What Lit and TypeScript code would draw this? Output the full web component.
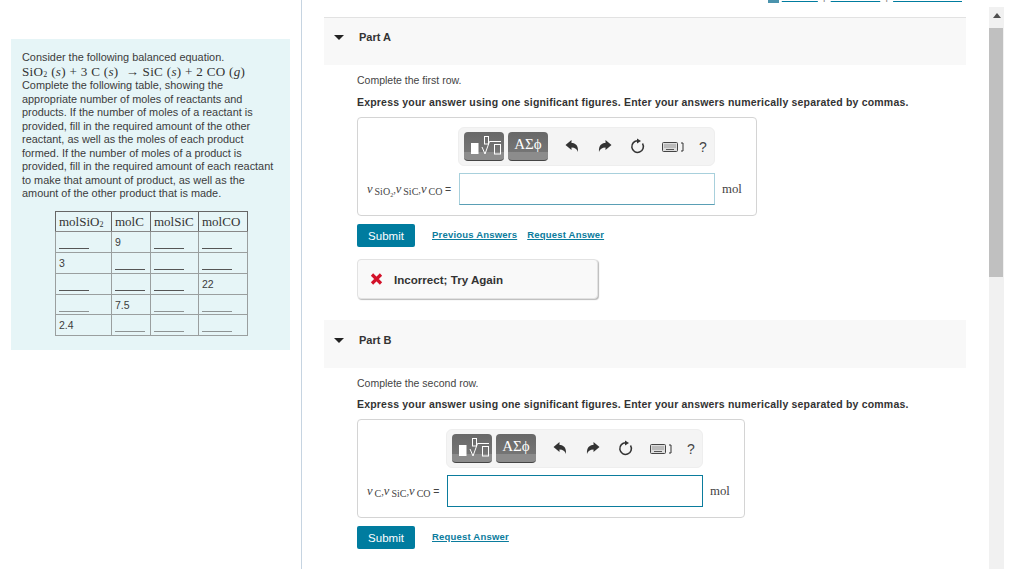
import { LitElement, css, html, svg } from "lit";
import { customElement } from "lit/decorators.js";

const blank = html`<span class="blank"></span>`;

@customElement("app-root")
export class AppRoot extends LitElement {
  render() {
    return html`
      <div class="left">
        <div class="problem">
          <div>Consider the following balanced equation.</div>
          <div class="eq">
            SiO<sub>2</sub> (<i>s</i>) + 3 C (<i>s</i>) &nbsp;→ SiC (<i>s</i>) + 2 CO (<i>g</i>)
          </div>
          <div>
            Complete the following table, showing the appropriate number of moles of reactants and
            products. If the number of moles of a reactant is provided, fill in the required amount
            of the other reactant, as well as the moles of each product formed. If the number of
            moles of a product is provided, fill in the required amount of each reactant to make
            that amount of product, as well as the amount of the other product that is made.
          </div>
          ${this._table()}
        </div>
      </div>

      <div class="main">
        <div class="top-links">
          <span class="top-icon"></span>
          <a>Review</a><span class="sep">|</span><a>Constants</a><span class="sep">|</span><a>Periodic Table</a>
        </div>

        <div class="part-head first"><span class="tri"></span>Part A</div>
        <div class="part-body">
          <p class="q">Complete the first row.</p>
          <p class="ex first">
            Express your answer using one significant figures. Enter your answers numerically separated by commas.
          </p>
          <div class="answer a">
            ${this._toolbar()}
            <div class="input-row">
              <span class="label">
                <i>ν</i><sub>SiO<sub>2</sub></sub>,<i>ν</i><sub>SiC</sub>,<i>ν</i><sub>CO</sub>
                <span class="eqs">=</span>
              </span>
              <span class="field soft"></span>
              <span class="unit">mol</span>
            </div>
          </div>
          <div class="actions">
            <button class="submit">Submit</button>
            <a class="link">Previous Answers</a>
            <a class="link">Request Answer</a>
          </div>
          <div class="feedback">
            <svg width="13" height="12" viewBox="0 0 13 12">
              <path d="M2 1.500 L11 10.500 M11 1.500 L2 10.500" stroke="#d3122a" stroke-width="3.200" fill="none" />
            </svg>
            <span>Incorrect; Try Again</span>
          </div>
        </div>

        <div class="part-head"><span class="tri"></span>Part B</div>
        <div class="part-body">
          <p class="q">Complete the second row.</p>
          <p class="ex">
            Express your answer using one significant figures. Enter your answers numerically separated by commas.
          </p>
          <div class="answer b">
            ${this._toolbar()}
            <div class="input-row">
              <span class="label">
                <i>ν</i><sub>C</sub>,<i>ν</i><sub>SiC</sub>,<i>ν</i><sub>CO</sub>
                <span class="eqs">=</span>
              </span>
              <span class="field"></span>
              <span class="unit">mol</span>
            </div>
          </div>
          <div class="actions">
            <button class="submit">Submit</button>
            <a class="link">Request Answer</a>
          </div>
        </div>
      </div>

      <div class="scrollbar">
        <div class="arrow"></div>
        <div class="thumb"></div>
      </div>
    `;
  }

  private _table() {
    const rows = [
      [blank, "9", blank, blank],
      ["3", blank, blank, blank],
      [blank, blank, blank, "22"],
      [blank, "7.5", blank, blank],
      ["2.4", blank, blank, blank],
    ];
    return html`
      <table>
        <colgroup>
          <col style="width:56px" />
          <col style="width:39px" />
          <col style="width:48px" />
          <col style="width:49px" />
        </colgroup>
        <tr>
          <th>molSiO<sub>2</sub></th>
          <th>molC</th>
          <th>molSiC</th>
          <th>molCO</th>
        </tr>
        ${rows.map(
          (row) => html`<tr>${row.map((cell) => html`<td>${cell}</td>`)}</tr>`
        )}
      </table>
    `;
  }

  private _toolbar() {
    return html`
      <div class="toolbar">
        <span class="tool">
          <svg width="38" height="26" viewBox="0 0 38 26" fill="none">
            <rect x="6" y="10" width="7.500" height="11" fill="#fff" />
            <rect x="19.500" y="3.500" width="4" height="7.500" stroke="#fff" />
            <path d="M17 14 L20 21 L24.500 8.500 H36" stroke="#fff" />
            <rect x="29.500" y="11.500" width="6" height="9.500" stroke="#fff" />
          </svg>
        </span>
        <span class="tool greek">ΑΣϕ</span>
        <span class="icons">
          ${this._icon(svg`<path d="M1.500 6 L7.500 1 V4 C11.500 4 14.500 6.500 14 13 C13 10 11 8.500 7.500 8.500 V11 Z" fill="#333" />`)}
          ${this._icon(svg`<path d="M14.500 6 L8.500 1 V4 C4.500 4 1.500 6.500 2 13 C3 10 5 8.500 8.500 8.500 V11 Z" fill="#333" />`)}
          ${this._icon(svg`
            <path d="M12.500 4.500 A5.800 5.800 0 1 1 8 1.800" stroke="#333" stroke-width="1.500" fill="none" />
            <path d="M7 -0.500 L11 2 L7 4.500 Z" fill="#333" />
          `)}
        </span>
        <svg class="kbd" width="24" height="10" viewBox="0 0 24 10" fill="none">
          <rect x="0.500" y="0.500" width="15" height="9" rx="1" fill="#ddd" stroke="#444" />
          <path d="M2.500 3 H13.500 M2.500 5 H13.500" stroke="#555" stroke-dasharray="1 1" />
          <path d="M4 7.500 H12" stroke="#555" />
          <path d="M19 1 H21 V9 H19" stroke="#333" />
        </svg>
        <span class="help">?</span>
      </div>
    `;
  }

  private _icon(content: unknown) {
    return html`<svg class="ico" width="16" height="15" viewBox="0 0 16 15">${content}</svg>`;
  }

  static styles = css`
    :host {
      display: flex;
      width: 1024px;
      height: 569px;
      overflow: hidden;
      background: #fff;
      font-family: "Liberation Sans", Arial, sans-serif;
      color: #333;
    }

    .left {
      width: 301px;
      flex: none;
      border-right: 1px solid #c6d4e1;
      padding-top: 39px;
    }

    .problem {
      width: 279px;
      height: 311px;
      box-sizing: border-box;
      margin-left: 11px;
      padding: 12px 14px 0 11px;
      background: #e6f5f7;
      font-size: 10.900px;
      line-height: 13.500px;
      color: #3c3c3c;
    }

    .eq {
      margin-bottom: 1px;
      font-family: "Liberation Serif", serif;
      font-size: 13.100px;
      letter-spacing: 0.300px;
      color: #333;
      white-space: nowrap;
    }

    .eq sub,
    th sub {
      font-size: 8px;
      line-height: 0;
      vertical-align: -1px;
    }

    table {
      table-layout: fixed;
      width: 192px;
      margin: 10px 0 0 33px;
      border-collapse: collapse;
      border: 1px solid #777;
    }

    th,
    td {
      border: 1px solid #9a9f9f;
      padding: 0 3px;
      height: 20.800px;
      box-sizing: border-box;
      overflow: hidden;
      white-space: nowrap;
    }

    th {
      border-color: #666;
      border-bottom-color: #888;
      font-family: "Liberation Serif", serif;
      font-size: 13px;
      font-weight: normal;
      text-align: left;
      color: #333;
    }

    td {
      font-size: 10.500px;
      line-height: 14px;
      vertical-align: top;
      padding-top: 3px;
    }

    .blank {
      display: block;
      width: 30px;
      height: 13px;
      border-bottom: 1px solid #555;
    }

    tr:nth-child(n + 5) .blank {
      border-bottom-color: #8f9494;
    }

    .main {
      flex: 1;
      min-width: 0;
      padding: 0 23px 0 22px;
    }

    .top-links {
      height: 3px;
      overflow: hidden;
      display: flex;
      align-items: flex-end;
      justify-content: flex-end;
      padding-right: 4px;
      font-size: 11px;
      line-height: 13px;
      color: #007c9f;
    }

    .top-links a {
      text-decoration: underline;
    }

    .top-links .sep {
      margin: 0 5px;
      color: #888;
    }

    .top-icon {
      width: 11px;
      height: 3px;
      margin-right: 3px;
      background: #4b93ad;
    }

    .part-head {
      display: flex;
      align-items: center;
      height: 48px;
      padding-bottom: 8px;
      box-sizing: border-box;
      background: #f8f8f8;
      font-size: 11px;
      font-weight: bold;
      color: #333;
    }

    .part-head.first {
      margin-top: 14px;
      padding-bottom: 9px;
      border-top: 1px solid #e2e2e2;
    }

    .tri {
      width: 0;
      height: 0;
      margin: 0 15px 0 10px;
      border-left: 5px solid transparent;
      border-right: 5px solid transparent;
      border-top: 5px solid #222;
    }

    .part-body {
      padding: 9px 0 0 33px;
      height: 255px;
      box-sizing: border-box;
    }

    p {
      margin: 0;
      font-size: 10.500px;
      line-height: 13px;
    }

    .q {
      color: #444;
    }

    .ex {
      margin-top: 8px;
      font-weight: bold;
      letter-spacing: 0.190px;
    }

    .ex.first {
      margin-top: 9px;
    }

    .answer {
      box-sizing: border-box;
      height: 99px;
      margin-top: 8px;
      padding-top: 9px;
      border: 1px solid #d4d4d4;
      border-radius: 4px;
    }

    .answer.a {
      width: 400px;
    }

    .answer.b {
      width: 388px;
    }

    .toolbar {
      display: flex;
      align-items: center;
      box-sizing: border-box;
      width: 257px;
      height: 39px;
      padding-left: 5px;
      background: #f4f4f4;
      border: 1px solid #eee;
      border-radius: 6px;
    }

    .a .toolbar {
      margin-left: 100px;
    }

    .b .toolbar {
      margin-left: 88px;
    }

    .tool {
      display: flex;
      align-items: center;
      justify-content: center;
      box-sizing: border-box;
      width: 40px;
      height: 29px;
      margin-right: 4px;
      border-radius: 4px;
      border-bottom: 1px solid #444;
      background: linear-gradient(#686868, #757575 72%, #8c8c8c 72%);
    }

    .greek {
      font-family: "Liberation Serif", serif;
      font-size: 15px;
      color: #fff;
      padding-bottom: 3px;
    }

    .icons {
      display: flex;
      gap: 17px;
      margin-left: 12px;
    }

    .ico {
      overflow: visible;
    }

    .kbd {
      flex: none;
      margin-left: 16px;
    }

    .help {
      margin-left: 13px;
      font-size: 14px;
      color: #444;
    }

    .input-row {
      display: flex;
      align-items: center;
      margin-top: 7px;
    }

    .label {
      box-sizing: border-box;
      width: 101px;
      padding-left: 9px;
      font-family: "Liberation Serif", serif;
      font-size: 10.500px;
      color: #444;
      white-space: nowrap;
    }

    .label i {
      font-size: 12.500px;
      margin-right: 2px;
    }

    .b .label {
      width: 89px;
    }

    .label sub {
      font-size: 10px;
      line-height: 0;
      vertical-align: -2px;
    }

    .label sub sub {
      font-size: 6px;
    }

    .eqs {
      font-family: "Liberation Sans", sans-serif;
    }

    .field {
      box-sizing: border-box;
      width: 256px;
      height: 32px;
      border: 1px solid #0b7c9d;
      background: #fff;
    }

    .field.soft {
      border-color: #a8d0dc;
      border-bottom-color: #5a9fb5;
    }

    .unit {
      margin-left: 7px;
      font-family: "Liberation Serif", serif;
      font-size: 12.800px;
      color: #444;
    }

    .actions {
      display: flex;
      align-items: center;
      gap: 10px;
      margin-top: 8px;
    }

    .submit {
      width: 58px;
      height: 23px;
      margin-right: 7px;
      padding: 0;
      border: none;
      border-radius: 2px;
      background: #007c9f;
      color: #fff;
      font-family: inherit;
      font-size: 11.500px;
    }

    .link {
      margin-bottom: 2px;
      font-size: 9.500px;
      font-weight: bold;
      letter-spacing: 0.200px;
      color: #0b7c9d;
      text-decoration: underline;
    }

    .feedback {
      display: flex;
      align-items: center;
      gap: 11px;
      box-sizing: border-box;
      width: 241px;
      height: 40px;
      margin-top: 12px;
      padding-left: 12px;
      background: #f9f9f9;
      border: 1px solid #e2e2e2;
      border-radius: 4px;
      box-shadow: 1px 1px 1px #bbb;
      font-size: 11.600px;
      font-weight: bold;
      color: #333;
    }

    .scrollbar {
      flex: none;
      width: 15px;
      margin: 7px 20px 0 0;
      background: #f1f1f1;
    }

    .arrow {
      width: 0;
      height: 0;
      margin: 6px auto 10px;
      border-left: 4px solid transparent;
      border-right: 4px solid transparent;
      border-bottom: 5px solid #505050;
    }

    .thumb {
      width: 14px;
      height: 249px;
      background: #c0c0c0;
    }
  `;
}
